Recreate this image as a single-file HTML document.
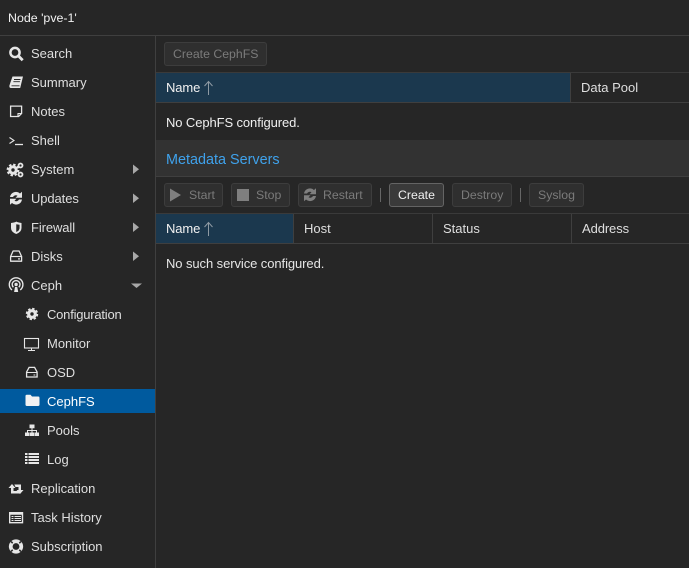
<!DOCTYPE html>
<html><head><meta charset="utf-8"><style>
html,body{margin:0;padding:0;background:#262626;width:689px;height:568px;overflow:hidden}
body{position:relative;font:13px/16px "Liberation Sans",Arial,sans-serif;color:#f2f2f2}
.a{position:absolute;white-space:nowrap}
.t{color:#dfdfdf}
.s{color:#dfdfdf;margin-top:1px}
.r{position:absolute;background:#3f3f3f}
.h{position:absolute;background:#1b384e}
.b{position:absolute;box-sizing:border-box;height:24px;border:1px solid #3d3d3d;border-radius:3px;background:#2f2f2f;color:#7b7b7b;line-height:22px;white-space:nowrap;font-size:12.3px}
svg{position:absolute;overflow:visible}
</style></head><body>
<div class="r" style="left:0;top:0;width:689px;height:35px;background:#262626"></div>
<div class="r" style="left:0;top:35px;width:689px;height:1px"></div>
<div class="a" style="left:8px;top:10px;color:#f2f2f2;font-size:12.4px">Node 'pve-1'</div>
<div class="r" style="left:155px;top:36px;width:1px;height:532px"></div>

<div class="a" style="left:0;top:389px;width:155px;height:24px;background:#005a9e"></div>

<div class="a s" style="left:31px;top:45px">Search</div>
<div class="a s" style="left:31px;top:74px">Summary</div>
<div class="a s" style="left:31px;top:103px">Notes</div>
<div class="a s" style="left:31px;top:132px">Shell</div>
<div class="a s" style="left:31px;top:161px">System</div>
<div class="a s" style="left:31px;top:190px;letter-spacing:-.1px">Updates</div>
<div class="a s" style="left:31px;top:219px;letter-spacing:-.1px">Firewall</div>
<div class="a s" style="left:31px;top:248px">Disks</div>
<div class="a s" style="left:31px;top:277px">Ceph</div>
<div class="a s" style="left:47px;top:306px;letter-spacing:-.22px">Configuration</div>
<div class="a s" style="left:47px;top:335px">Monitor</div>
<div class="a s" style="left:47px;top:364px">OSD</div>
<div class="a s" style="left:47px;top:393px;color:#fff">CephFS</div>
<div class="a s" style="left:47px;top:422px">Pools</div>
<div class="a s" style="left:47px;top:451px">Log</div>
<div class="a s" style="left:31px;top:480px">Replication</div>
<div class="a s" style="left:31px;top:509px">Task History</div>
<div class="a s" style="left:31px;top:538px">Subscription</div>

<svg width="689" height="568" style="left:0;top:0" fill="#e6e6e6" stroke="none">
<!-- search -->
<circle cx="15" cy="52.500" r="4.600" fill="none" stroke="#e6e6e6" stroke-width="2.500"/><path d="M18.500 56l4.200 4.200" stroke="#e6e6e6" stroke-width="2.800" fill="none"/>
<!-- summary -->
<path d="M12.500 76.500H23l-2.800 11.500H11q-2 0-1.600-2.500z"/><path d="M14 79.500h6.500M13.400 81.700h6.500M11.500 85.800h8" stroke="#262626" stroke-width=".9" fill="none"/>
<!-- notes -->
<path d="M10.600 106.100h11v7.400l-3 3h-8z" fill="none" stroke="#e6e6e6" stroke-width="1.300"/><path d="M18 116.500v-3h3.500" fill="none" stroke="#e6e6e6" stroke-width="1.100"/>
<!-- shell -->
<path d="M9.500 137.500l4.500 3-4.500 3" fill="none" stroke="#e6e6e6" stroke-width="1.100"/><path d="M15 144.500h8" stroke="#e6e6e6" stroke-width="1.300"/>
<!-- system -->
<circle cx="13" cy="170" r="3.200" fill="none" stroke="#e6e6e6" stroke-width="3"/><circle cx="13" cy="170" r="5.300" fill="none" stroke="#e6e6e6" stroke-width="2.200" stroke-dasharray="2.400 1.760"/>
<circle cx="20.500" cy="165.500" r="2" fill="none" stroke="#e6e6e6" stroke-width="1.800"/><circle cx="20.500" cy="174.500" r="2" fill="none" stroke="#e6e6e6" stroke-width="1.800"/>
<path d="M133 164.500v9.500l6-4.750z" fill="#a8a8a8"/>
<!-- updates -->
<path d="M10 197a6 6 0 0 1 10-3.500l2-1.800v6h-6.500l2-2a3.300 3.300 0 0 0-4.500 1.300z"/><path d="M22 199.500a6 6 0 0 1-10 3.500l-2 1.800v-6h6.500l-2 2a3.300 3.300 0 0 0 4.500-1.300z"/>
<path d="M133 193.500v9.500l6-4.750z" fill="#a8a8a8"/>
<!-- firewall -->
<path fill-rule="evenodd" d="M11 223q5-.8 5.250-1.500Q17 222.200 21.500 223v5q0 4-5.250 6Q11 232 11 228zM16.250 224.300v7.700q3.300-1.400 3.300-4v-3.200z"/>
<path d="M133 222.500v9.500l6-4.750z" fill="#a8a8a8"/>
<!-- disks -->
<path d="M10.600 256.500l2.500-5.500h6l2.500 5.500v4.700h-11z" fill="none" stroke="#e6e6e6" stroke-width="1.300" stroke-linejoin="round"/><path d="M10.500 256.500h11" stroke="#e6e6e6" stroke-width="1.200"/><path d="M18 258.900h2" stroke="#e6e6e6" stroke-width="1.200"/>
<path d="M133 251.500v9.500l6-4.750z" fill="#a8a8a8"/>
<!-- ceph -->
<g fill="none" stroke="#e6e6e6" stroke-width="1.400"><path d="M12 290a6.800 6.800 0 1 1 8.200 0"/><path d="M13.400 287.300a3.900 3.900 0 1 1 5.400 0"/></g><circle cx="16.100" cy="284.500" r="1.700"/><path d="M15 287h2.300l.9 5h-4.100z"/>
<path d="M131 283.500h11l-5.500 4.500z" fill="#a8a8a8"/>
<!-- configuration -->
<circle cx="32" cy="314" r="3.300" fill="none" stroke="#e6e6e6" stroke-width="3.200"/><circle cx="32" cy="314" r="5.300" fill="none" stroke="#e6e6e6" stroke-width="1.800" stroke-dasharray="2.400 1.760"/>
<!-- monitor -->
<rect x="24.500" y="338.500" width="14" height="9.500" fill="none" stroke="#e6e6e6" stroke-width="1.100"/><path d="M31.500 348v2.500M28 350.500h7" stroke="#e6e6e6" fill="none"/>
<!-- osd -->
<path d="M26.600 372l2.500-4.600h5.500l2.500 4.600v5h-10.500z" fill="none" stroke="#e6e6e6" stroke-width="1.300"/><path d="M26.500 372.500h10.500" stroke="#e6e6e6"/><path d="M33.500 375h1.800" stroke="#e6e6e6"/>
<!-- folder -->
<path d="M25.500 396q0-1.200 1.200-1.200h3.800l1.500 1.700h6.300q1.200 0 1.200 1.200v7.100q0 1.200-1.200 1.200H26.700q-1.200 0-1.200-1.200z" fill="#f2f2f2"/>
<!-- pools -->
<path d="M29.500 424.500h5v3.800h-5zM31.500 428h1v2h-1zM27 430h10v1h-10zM27 431h1v1.500h-1zM31.500 431h1v1.500h-1zM36 431h1v1.500h-1zM25 432.500h4.400v3.500H25zM29.800 432.500h4.400v3.500h-4.400zM34.600 432.500H39v3.500h-4.400z"/>
<!-- log -->
<path d="M25 453h2.500v2H25zM25 456h2.500v2H25zM25 459h2.500v2H25zM25 462h2.500v2H25zM28.500 453H39v2H28.500zM28.500 456H39v2H28.500zM28.500 459H39v2H28.500zM28.500 462H39v2H28.500z"/>
<!-- replication -->
<path d="M8.500 488L12 484l3.500 4h-2v3H19l1.500 2.500H11V488z"/><path d="M23.500 490L20 494l-3.500-4h2v-3H15.500l-1.200-2.500H21V490z"/>
<!-- task history -->
<rect x="9.700" y="512.700" width="12.800" height="10" fill="none" stroke="#e6e6e6" stroke-width="1.400"/><path d="M9.500 513h13v1.800h-13zM11.500 516h2v1h-2zM14.500 516h6.500v1h-6.500zM11.500 518h2v1h-2zM14.500 518h6.500v1h-6.500zM11.500 520h2v1h-2zM14.500 520h6.500v1h-6.500z"/>
<!-- subscription -->
<circle cx="16" cy="546.500" r="5" fill="none" stroke="#e6e6e6" stroke-width="3.200"/><circle cx="16" cy="546.500" r="6.800" fill="none" stroke="#e6e6e6" stroke-width=".7"/>
<path d="M11 541.500l1.700 1.700M21 541.500l-1.700 1.700M11 551.500l1.700-1.700M21 551.500l-1.700-1.700" stroke="#262626" stroke-width="1.500" fill="none"/>
</svg>

<!-- top panel -->
<div class="b" style="left:164px;top:42px;width:103px;padding-left:8px">Create CephFS</div>
<div class="r" style="left:156px;top:72px;width:533px;height:1px;background:#3a3a3a"></div>
<div class="h" style="left:156px;top:73px;width:414px;height:29px"></div>
<div class="r" style="left:570px;top:73px;width:1px;height:29px"></div>
<div class="r" style="left:156px;top:102px;width:533px;height:1px"></div>
<div class="a" style="left:166px;top:80px;color:#f0f0f0;letter-spacing:-.1px">Name</div>
<svg width="12" height="16" style="left:204px;top:80px"><path d="M4.500 15V1.500M.5 6l4-4.500 4 4.500" fill="none" stroke="#8e9aa3" stroke-width="1"/></svg>
<div class="a t" style="left:581px;top:80px">Data Pool</div>
<div class="a" style="left:166px;top:115px;color:#f0f0f0;letter-spacing:-.1px">No CephFS configured.</div>

<!-- metadata -->
<div class="a" style="left:156px;top:140px;width:533px;height:36px;background:#323232"></div>
<div class="r" style="left:156px;top:176px;width:533px;height:1px"></div>
<div class="a" style="left:166px;top:152px;color:#3fa2ec;font-size:14.400px">Metadata Servers</div>

<div class="b" style="left:164px;top:183px;width:59px;padding-left:24px">Start</div>
<svg width="16" height="16" style="left:170px;top:188px"><path d="M0 .5v13l11-6.500z" fill="#7f7f7f"/></svg>
<div class="b" style="left:231px;top:183px;width:59px;padding-left:24px">Stop</div>
<div class="a" style="left:237px;top:189px;width:12px;height:12px;background:#7f7f7f"></div>
<div class="b" style="left:298px;top:183px;width:74px;padding-left:24px">Restart</div>
<svg width="16" height="16" style="left:304px;top:188px" fill="#7f7f7f"><g transform="translate(-10,-191.500)"><path d="M10 197a6 6 0 0 1 10-3.500l2-1.800v6h-6.500l2-2a3.300 3.300 0 0 0-4.500 1.300z"/><path d="M22 199.500a6 6 0 0 1-10 3.500l-2 1.800v-6h6.500l-2 2a3.300 3.300 0 0 0 4.500-1.300z"/></g></svg>
<div class="r" style="left:380px;top:188px;width:1px;height:14px;background:#666"></div>
<div class="b" style="left:389px;top:183px;width:55px;padding-left:8px;background:#3a3a3a;border-color:#646464;color:#f0f0f0">Create</div>
<div class="b" style="left:452px;top:183px;width:60px;padding-left:8px">Destroy</div>
<div class="r" style="left:520px;top:188px;width:1px;height:14px;background:#666"></div>
<div class="b" style="left:529px;top:183px;width:55px;padding-left:8px">Syslog</div>

<div class="r" style="left:156px;top:213px;width:533px;height:1px;background:#3a3a3a"></div>
<div class="h" style="left:156px;top:214px;width:137px;height:29px"></div>
<div class="r" style="left:293px;top:214px;width:1px;height:29px"></div>
<div class="r" style="left:432px;top:214px;width:1px;height:29px"></div>
<div class="r" style="left:571px;top:214px;width:1px;height:29px"></div>
<div class="r" style="left:156px;top:243px;width:533px;height:1px"></div>
<div class="a" style="left:166px;top:221px;color:#f0f0f0;letter-spacing:-.1px">Name</div>
<svg width="12" height="16" style="left:204px;top:221px"><path d="M4.500 15V1.500M.5 6l4-4.500 4 4.500" fill="none" stroke="#8e9aa3" stroke-width="1"/></svg>
<div class="a t" style="left:304px;top:221px">Host</div>
<div class="a t" style="left:443px;top:221px">Status</div>
<div class="a t" style="left:582px;top:221px;letter-spacing:-.1px">Address</div>
<div class="a" style="left:166px;top:256px;color:#e6e6e6;letter-spacing:-.08px">No such service configured.</div>
</body></html>
